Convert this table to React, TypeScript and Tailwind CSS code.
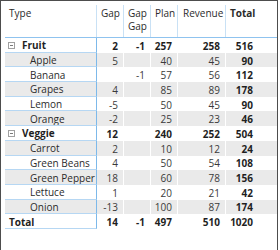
import React from 'react'

type Row = {
  label: string
  kind: 'group' | 'leaf' | 'total'
  band?: boolean
  values: string[]
}

const ROWS: Row[] = [
  { label: 'Fruit', kind: 'group', values: ['2', '-1', '257', '258', '516'] },
  { label: 'Apple', kind: 'leaf', band: true, values: ['5', '', '40', '45', '90'] },
  { label: 'Banana', kind: 'leaf', values: ['', '-1', '57', '56', '112'] },
  { label: 'Grapes', kind: 'leaf', band: true, values: ['4', '', '85', '89', '178'] },
  { label: 'Lemon', kind: 'leaf', values: ['-5', '', '50', '45', '90'] },
  { label: 'Orange', kind: 'leaf', band: true, values: ['-2', '', '25', '23', '46'] },
  { label: 'Veggie', kind: 'group', values: ['12', '', '240', '252', '504'] },
  { label: 'Carrot', kind: 'leaf', band: true, values: ['2', '', '10', '12', '24'] },
  { label: 'Green Beans', kind: 'leaf', values: ['4', '', '50', '54', '108'] },
  { label: 'Green Pepper', kind: 'leaf', band: true, values: ['18', '', '60', '78', '156'] },
  { label: 'Lettuce', kind: 'leaf', values: ['1', '', '20', '21', '42'] },
  { label: 'Onion', kind: 'leaf', band: true, values: ['-13', '', '100', '87', '174'] },
  { label: 'Total', kind: 'total', values: ['14', '-1', '497', '510', '1020'] },
]

const COLS = 'grid grid-cols-[92px_27px_27px_27px_48px_31px]'

function CollapseIcon() {
  return (
    <span className="w-[7px] h-[7px] border border-[#a0a0a0] flex items-center justify-center mr-[7px] shrink-0">
      <span className="w-[3px] h-px bg-[#7a7a7a]" />
    </span>
  )
}

export default function App() {
  return (
    <div className="w-[280px] h-[250px] bg-white overflow-hidden" style={{ fontFamily: '"Open Sans", "Noto Sans", sans-serif' }}>
      <div className="w-[278px] h-[250px] border-l border-t border-r border-[#4d4d4d] pl-[4px] pt-[4px] text-[10px] leading-[13px] text-[#2b2b2b]">
        {/* header */}
        <div className={`${COLS} h-[33px] border-b border-[#8fc3ef] leading-[12.7px]`}>
          <div className="border-r border-[#c9e1f5] pl-[4px] pt-[2px]">Type</div>
          <div className="border-r border-[#c9e1f5] pl-[4px] pt-[2px]">Gap</div>
          <div className="border-r border-[#c9e1f5] pl-[4px] pt-[2px]">Gap<br />Gap</div>
          <div className="border-r border-[#c9e1f5] pl-[4px] pt-[2px]">Plan</div>
          <div className="border-r border-[#c9e1f5] pl-[5px] pt-[2px]">Revenue</div>
          <div className="pl-[4px] pt-[2px] font-bold">Total</div>
        </div>

        <div className="flex flex-col">
          {ROWS.map((r) => {
            const bold = r.kind !== 'leaf'
            return (
              <div key={r.label} className={`${COLS} grid-rows-[14.7px] h-[14.7px] shrink-0 ${r.band ? 'bg-[#eaeaea]' : ''}`}>
                <div className="flex items-center min-h-0 overflow-hidden pt-[2px] border-r border-b border-r-[#7db9ea] border-b-[#b6d7f3] pl-[3px]">
                  {r.kind === 'group' && <CollapseIcon />}
                  {r.kind === 'leaf' && <span className="w-[22px] shrink-0" />}
                  {r.kind === 'total' && <span className="w-[1px] shrink-0" />}
                  <span className={`whitespace-nowrap ${bold ? 'font-bold text-[#1f1f1f]' : ''}`}>{r.label}</span>
                </div>
                {r.values.map((v, i) => (
                  <div
                    key={i}
                    className={`flex items-center justify-end min-h-0 pt-[2px] ${i === 4 ? 'pr-[4px]' : 'pr-[5px] border-r border-white'} ${bold || i === 4 ? 'font-bold text-[#1f1f1f]' : 'text-[#3a3a3a]'}`}
                  >
                    {v}
                  </div>
                ))}
              </div>
            )
          })}
        </div>
      </div>
    </div>
  )
}
